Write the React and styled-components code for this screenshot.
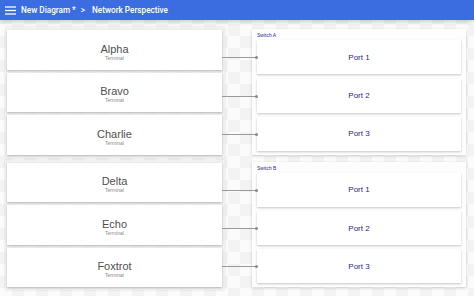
import React from 'react';
import styled, { createGlobalStyle } from 'styled-components';

const GlobalStyle = createGlobalStyle`
  html, body {
    margin: 0;
    padding: 0;
    width: 474px;
    height: 296px;
    overflow: hidden;
    font-family: "Liberation Sans", Arial, sans-serif;
  }
`;

const Page = styled.div`
  width: 474px;
  height: 296px;
  display: flex;
  flex-direction: column;
  background-color: #fbfbfb;
  background-image: conic-gradient(#f3f3f3 25%, transparent 0 50%, #f3f3f3 0 75%, transparent 0);
  background-size: 24px 24px;
`;

const Header = styled.div`
  height: 20px;
  flex: none;
  display: flex;
  align-items: center;
  gap: 5px;
  padding: 0 5px;
  background: #3c6de0;
  color: #fff;
  font-family: Roboto, "Liberation Sans", sans-serif;
  font-weight: 500;
  font-size: 8.2px;
  box-shadow: 0 2px 4px rgba(0, 0, 0, 0.18);
  position: relative;
  z-index: 2;
`;

const Crumb = styled.span`
  white-space: nowrap;
  margin-left: ${({ gap }) => gap || 0}px;
`;

const Main = styled.div`
  display: flex;
  flex-direction: column;
  gap: 2px;
  padding-top: 7px;
`;

const GroupRow = styled.div`
  display: flex;
  align-items: flex-start;
`;

const TerminalPanel = styled.div`
  margin-left: 5px;
  width: 220px;
  box-sizing: border-box;
  padding: 3px 3px 3px 2px;
  display: flex;
  flex-direction: column;
  gap: 3px;
  background: rgba(236, 236, 236, 0.7);
  box-shadow: 0 0 2px rgba(0, 0, 0, 0.12);
`;

const TerminalCard = styled.div`
  height: 39.5px;
  background: #fff;
  box-shadow: 0 1px 2px rgba(0, 0, 0, 0.25);
  display: flex;
  flex-direction: column;
  align-items: center;
  justify-content: center;
  padding-top: 5px;
  box-sizing: border-box;
`;

const TerminalName = styled.div`
  font-size: 11px;
  line-height: 11px;
  color: #4f4f4f;
`;

const TerminalType = styled.div`
  font-size: 5px;
  line-height: 6px;
  color: #8a8a8a;
`;

const SwitchPanel = styled.div`
  margin-left: 27px;
  margin-top: 2px;
  width: 214px;
  box-sizing: border-box;
  padding: 2px 5px 4px 5px;
  background: #fdfdfd;
  box-shadow: 0 1px 3px rgba(0, 0, 0, 0.18);
  display: flex;
  flex-direction: column;
  gap: 4.3px;
`;

const SwitchLabel = styled.div`
  font-size: 5px;
  line-height: 8px;
  height: 5px;
  color: #2a2a8a;
`;

const PortCard = styled.div`
  position: relative;
  height: 34px;
  background: #fff;
  box-shadow: 0 1px 2px rgba(0, 0, 0, 0.22);
  display: flex;
  align-items: center;
  justify-content: center;
  font-size: 8px;
  color: #1f1f82;
`;

const Link = styled.div`
  position: absolute;
  left: -35px;
  top: 50%;
  width: 35px;
  height: 1px;
  background: #9a9a9a;

  &::after {
    content: '';
    position: absolute;
    right: -1px;
    top: -1px;
    width: 3px;
    height: 3px;
    border-radius: 50%;
    background: #8a8a8a;
  }
`;

const MenuIcon = () => (
  <svg width="11" height="9" viewBox="0 0 11 9">
    <g stroke="#fff" strokeWidth="1.3">
      <line x1="0" y1="1" x2="11" y2="1" />
      <line x1="0" y1="4.5" x2="11" y2="4.5" />
      <line x1="0" y1="8" x2="11" y2="8" />
    </g>
  </svg>
);

const groups = [
  { terminals: ['Alpha', 'Bravo', 'Charlie'], switchName: 'Switch A' },
  { terminals: ['Delta', 'Echo', 'Foxtrot'], switchName: 'Switch B' },
];

export default function App() {
  return (
    <Page>
      <GlobalStyle />
      <Header>
        <MenuIcon />
        <Crumb>New Diagram *</Crumb>
        <Crumb>&gt;</Crumb>
        <Crumb gap={2}>Network Perspective</Crumb>
      </Header>
      <Main>
        {groups.map((g) => (
          <GroupRow key={g.switchName}>
            <TerminalPanel>
              {g.terminals.map((t) => (
                <TerminalCard key={t}>
                  <TerminalName>{t}</TerminalName>
                  <TerminalType>Terminal</TerminalType>
                </TerminalCard>
              ))}
            </TerminalPanel>
            <SwitchPanel>
              <SwitchLabel>{g.switchName}</SwitchLabel>
              {[1, 2, 3].map((n) => (
                <PortCard key={n}>
                  <Link />
                  Port {n}
                </PortCard>
              ))}
            </SwitchPanel>
          </GroupRow>
        ))}
      </Main>
    </Page>
  );
}
